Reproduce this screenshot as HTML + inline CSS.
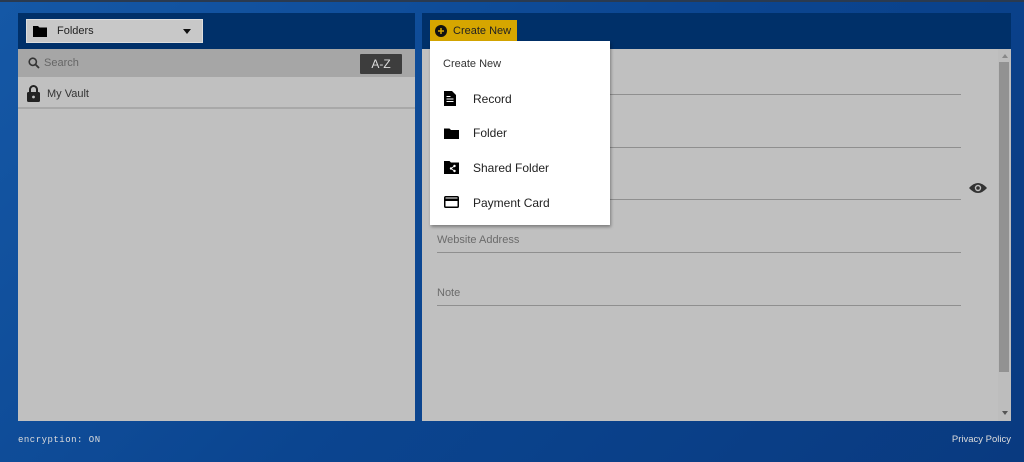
<!DOCTYPE html>
<html><head><style>
*{margin:0;padding:0;box-sizing:border-box}
body{width:1024px;height:462px;overflow:hidden;background:linear-gradient(135deg,#1558a6 0%,#0b4590 50%,#093a80 100%);font-family:"Liberation Sans",sans-serif;position:relative}
.abs{position:absolute}
.panel{background:#c0c0c0}
.hdr{background:#003069}
.line{position:absolute;left:437px;width:524px;height:1px;background:#8f8f8f}
.lbl{position:absolute;left:437px;font-size:11px;color:#6b6b6b}
.mi{position:absolute;left:473px;font-size:12px;color:#222}
.ic{position:absolute;left:444px}
</style></head><body>
<div class="abs" style="left:0;top:0;width:1024px;height:2px;background:#2a3a50"></div>
<!-- left panel -->
<div class="abs hdr" style="left:18px;top:13px;width:397px;height:36px"></div>
<div class="abs" style="left:26px;top:19px;width:177px;height:24px;background:#c8c8c8;border:1px solid #ddd"></div>
<svg class="abs" style="left:33px;top:25px" width="14" height="12" viewBox="0 0 14 12"><path d="M0 1h5l1.5 1.5H14V12H0z" fill="#000"/></svg>
<div class="abs" style="left:57px;top:25px;font-size:11px;color:#222">Folders</div>
<svg class="abs" style="left:183px;top:29px" width="8" height="5"><path d="M0 0h8L4 5z" fill="#111"/></svg>
<div class="abs" style="left:18px;top:49px;width:397px;height:28px;background:#a6a6a6"></div>
<svg class="abs" style="left:28px;top:57px" width="12" height="12" viewBox="0 0 12 12"><circle cx="4.8" cy="4.8" r="3.6" stroke="#333" stroke-width="1.6" fill="none"/><path d="M7.5 7.5L11 11" stroke="#333" stroke-width="1.8"/></svg>
<div class="abs" style="left:44px;top:57px;font-size:11px;color:#666">Search</div>
<div class="abs" style="left:360px;top:54px;width:42px;height:20px;background:#3d3d3d;color:#ddd;font-size:12px;text-align:center;line-height:20px;border-radius:1px">A-Z</div>
<div class="abs panel" style="left:18px;top:77px;width:397px;height:344px"></div>
<div class="abs" style="left:18px;top:107px;width:397px;height:2px;background:#a8a8a8"></div>
<svg class="abs" style="left:27px;top:85px" width="13" height="17" viewBox="0 0 13 17"><path d="M3 7V4.5a3.5 3.5 0 0 1 7 0V7" stroke="#222" stroke-width="2" fill="none"/><rect x="0" y="7" width="13" height="10" rx="1.5" fill="#222"/><circle cx="6.5" cy="12" r="1.4" fill="#c0c0c0"/></svg>
<div class="abs" style="left:47px;top:88px;font-size:11px;color:#333">My Vault</div>
<!-- right panel -->
<div class="abs hdr" style="left:422px;top:13px;width:589px;height:36px"></div>
<div class="abs panel" style="left:422px;top:49px;width:589px;height:372px"></div>
<div class="line" style="top:94px"></div>
<div class="line" style="top:147px"></div>
<div class="line" style="top:199px"></div>
<div class="line" style="top:252px"></div>
<div class="line" style="top:305px"></div>
<div class="lbl" style="top:234px">Website Address</div>
<div class="lbl" style="top:287px">Note</div>
<svg class="abs" style="left:969px;top:182px" width="18" height="12" viewBox="0 0 18 12"><path d="M0 6Q9 -4 18 6Q9 16 0 6z" fill="#333"/><circle cx="9" cy="6" r="3.2" fill="#c0c0c0"/><circle cx="9" cy="6" r="1.8" fill="#333"/></svg>
<div class="abs" style="left:998px;top:49px;width:13px;height:372px;background:#bdbdbd"></div>
<div class="abs" style="left:999px;top:62px;width:10px;height:310px;background:#929292"></div>
<svg class="abs" style="left:1002px;top:54px" width="6" height="4"><path d="M0 4h6L3 0z" fill="#888"/></svg>
<svg class="abs" style="left:1002px;top:411px" width="6" height="4"><path d="M0 0h6L3 4z" fill="#555"/></svg>
<!-- create new button -->
<div class="abs" style="left:430px;top:20px;width:87px;height:22px;background:#d6a600"></div>
<svg class="abs" style="left:435px;top:25px" width="12" height="12" viewBox="0 0 12 12"><circle cx="6" cy="6" r="6" fill="#111"/><path d="M6 3v6M3 6h6" stroke="#d6a600" stroke-width="1.5"/></svg>
<div class="abs" style="left:453px;top:25px;font-size:11px;color:#222">Create New</div>
<!-- menu -->
<div class="abs" style="left:430px;top:41px;width:180px;height:184px;background:#fff;box-shadow:1px 2px 3px rgba(0,0,0,.35)"></div>
<div class="abs" style="left:443px;top:58px;font-size:11px;color:#333">Create New</div>
<svg class="ic" style="top:91px" width="12" height="15" viewBox="0 0 12 15"><path d="M0 0h8l4 4v11H0z" fill="#000"/><path d="M2.5 8h7M2.5 10.5h7M2.5 5.5h4" stroke="#fff" stroke-width="1.1"/></svg>
<div class="mi" style="top:92px">Record</div>
<svg class="ic" style="top:127px" width="15" height="12" viewBox="0 0 15 12"><path d="M0 1.5h5.5l1.5 1.5H15V12H0z" fill="#000"/></svg>
<div class="mi" style="top:126px">Folder</div>
<svg class="ic" style="top:161px" width="15" height="13" viewBox="0 0 15 13"><path d="M0 0h5.5l1.5 1.5H15V13H0z" fill="#000"/><circle cx="10.5" cy="5" r="1.2" fill="#fff"/><circle cx="7" cy="7.5" r="1.2" fill="#fff"/><circle cx="10.5" cy="10" r="1.2" fill="#fff"/><path d="M10.5 5L7 7.5l3.5 2.5" stroke="#fff" stroke-width=".8" fill="none"/></svg>
<div class="mi" style="top:161px">Shared Folder</div>
<svg class="ic" style="top:196px" width="15" height="12" viewBox="0 0 15 12"><rect x=".75" y=".75" width="13.5" height="10.5" rx="1" fill="none" stroke="#000" stroke-width="1.5"/><rect x="1" y="2.5" width="13" height="2.5" fill="#000"/></svg>
<div class="mi" style="top:196px">Payment Card</div>
<!-- footer -->
<div class="abs" style="left:18px;top:435px;font-family:'Liberation Mono',monospace;font-size:9px;color:#ddd;letter-spacing:.5px">encryption: ON</div>
<div class="abs" style="right:13px;top:434px;font-size:9.5px;color:#ddd">Privacy Policy</div>
</body></html>
